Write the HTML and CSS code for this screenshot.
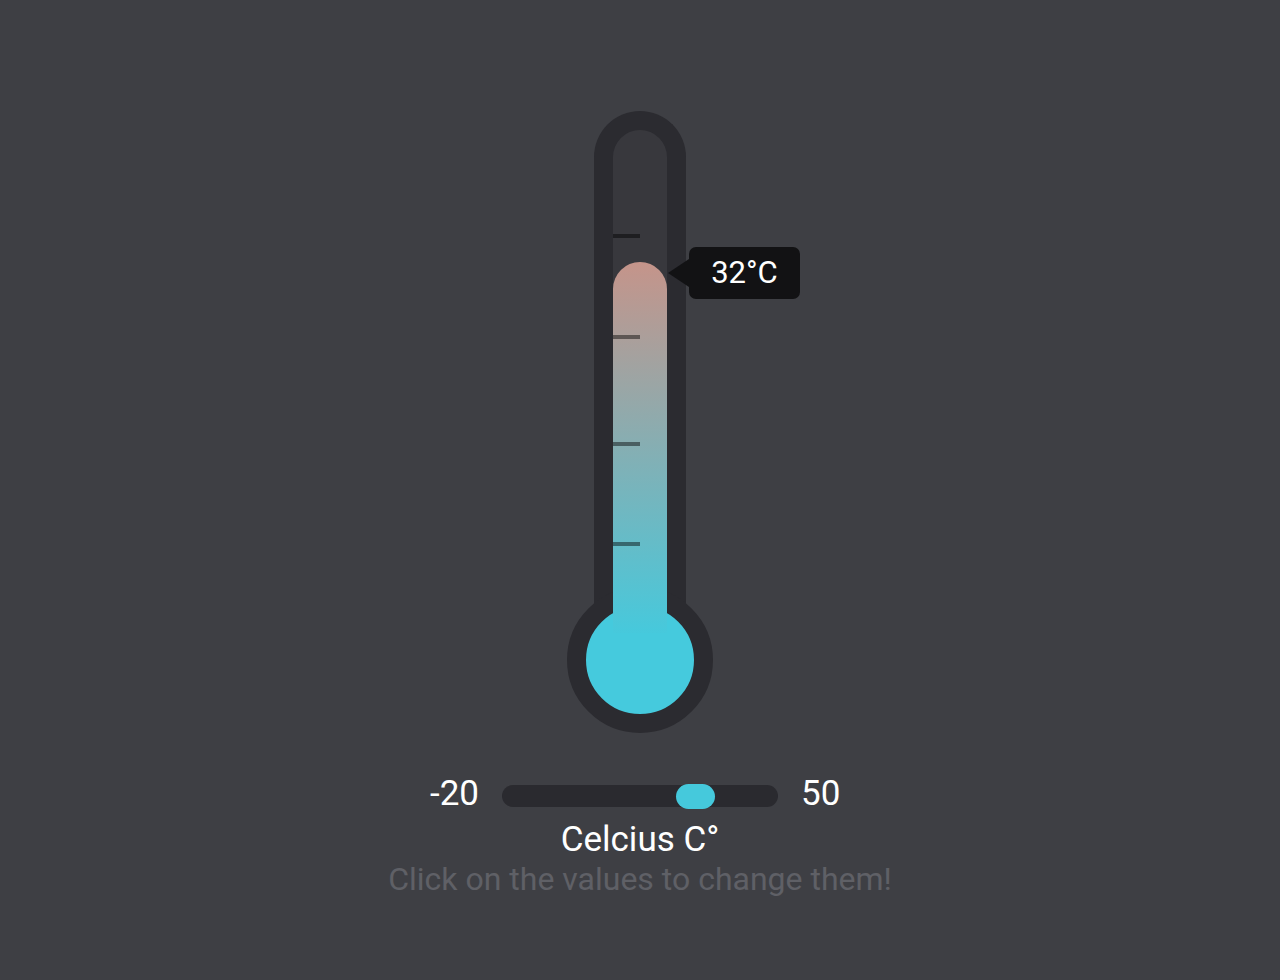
FILE: index.html
```html
<!DOCTYPE html>
<html lang="en">
<head>
<meta charset="utf-8">
<title>Thermometer</title>
<link rel="stylesheet" href="styles.css">
</head>
<body>
<main class="app">
  <div class="thermo">
    <div class="tube"></div>
    <div class="bulb"></div>
    <div class="mercury"></div>
    <div class="tick t1"></div>
    <div class="tick t2"></div>
    <div class="tick t3"></div>
    <div class="tick t4"></div>
    <div class="tooltip">32°C</div>
  </div>
  <div class="range">
    <span class="range-min">-20</span>
    <div class="track"><div class="thumb"></div></div>
    <span class="range-max">50</span>
  </div>
  <div class="unit">Celcius C°</div>
  <div class="hint">Click on the values to change them!</div>
</main>
</body>
</html>
```

FILE: styles.css
```css
html, body {
  margin: 0;
  padding: 0;
}
body {
  background: #3e3f44;
  font-family: Roboto, "Liberation Sans", sans-serif;
  color: #ffffff;
  height: 980px;
  overflow: hidden;
}
.app {
  display: flex;
  flex-direction: column;
  align-items: center;
  padding-top: 111px;
}
.thermo {
  position: relative;
  width: 146px;
  height: 622px;
}
.tube {
  position: absolute;
  left: 27px;
  top: 0;
  width: 92px;
  height: 520px;
  box-sizing: border-box;
  border: 19px solid #2b2b30;
  border-bottom: none;
  border-radius: 46px 46px 0 0;
  background: #38383d;
}
.bulb {
  position: absolute;
  left: 0;
  top: 476px;
  width: 146px;
  height: 146px;
  box-sizing: border-box;
  border: 19px solid #2b2b30;
  border-radius: 50%;
  background: #45cadd;
}
.mercury {
  position: absolute;
  left: 46px;
  top: 151px;
  width: 54px;
  height: 371px;
  border-radius: 27px 27px 0 0;
  background: linear-gradient(to bottom, #c5948a 0%, #46c9dc 100%);
}
.tick {
  position: absolute;
  left: 46px;
  width: 27px;
  height: 4px;
  background: rgba(0, 0, 0, 0.45);
}
.t1 { top: 123px; }
.t2 { top: 224px; }
.t3 { top: 331px; }
.t4 { top: 431px; }
.tooltip {
  position: absolute;
  left: 122px;
  top: 136px;
  width: 111px;
  height: 52px;
  box-sizing: border-box;
  background: #121214;
  border-radius: 7px;
  font-size: 31px;
  line-height: 52px;
  text-align: center;
}
.tooltip::before {
  content: "";
  position: absolute;
  left: -21px;
  top: 12px;
  border-top: 14px solid transparent;
  border-bottom: 14px solid transparent;
  border-right: 21px solid #121214;
}
.range {
  display: grid;
  grid-template-columns: 1fr 276px 1fr;
  column-gap: 23px;
  align-items: center;
  width: 700px;
  margin-top: 40px;
  font-size: 35px;
  line-height: 41px;
}
.range-min {
  justify-self: end;
}
.range-max {
  justify-self: start;
}
.track {
  position: relative;
  height: 22px;
  border-radius: 11px;
  background: #2a2a2f;
  margin-top: 4px;
}
.thumb {
  position: absolute;
  left: 174px;
  top: -1px;
  width: 39px;
  height: 25px;
  border-radius: 12.5px;
  background: #45c9dc;
}
.unit {
  font-size: 35px;
  line-height: 41px;
  margin-top: 5px;
}
.hint {
  font-size: 32px;
  line-height: 38px;
  color: #5f6066;
}
```
